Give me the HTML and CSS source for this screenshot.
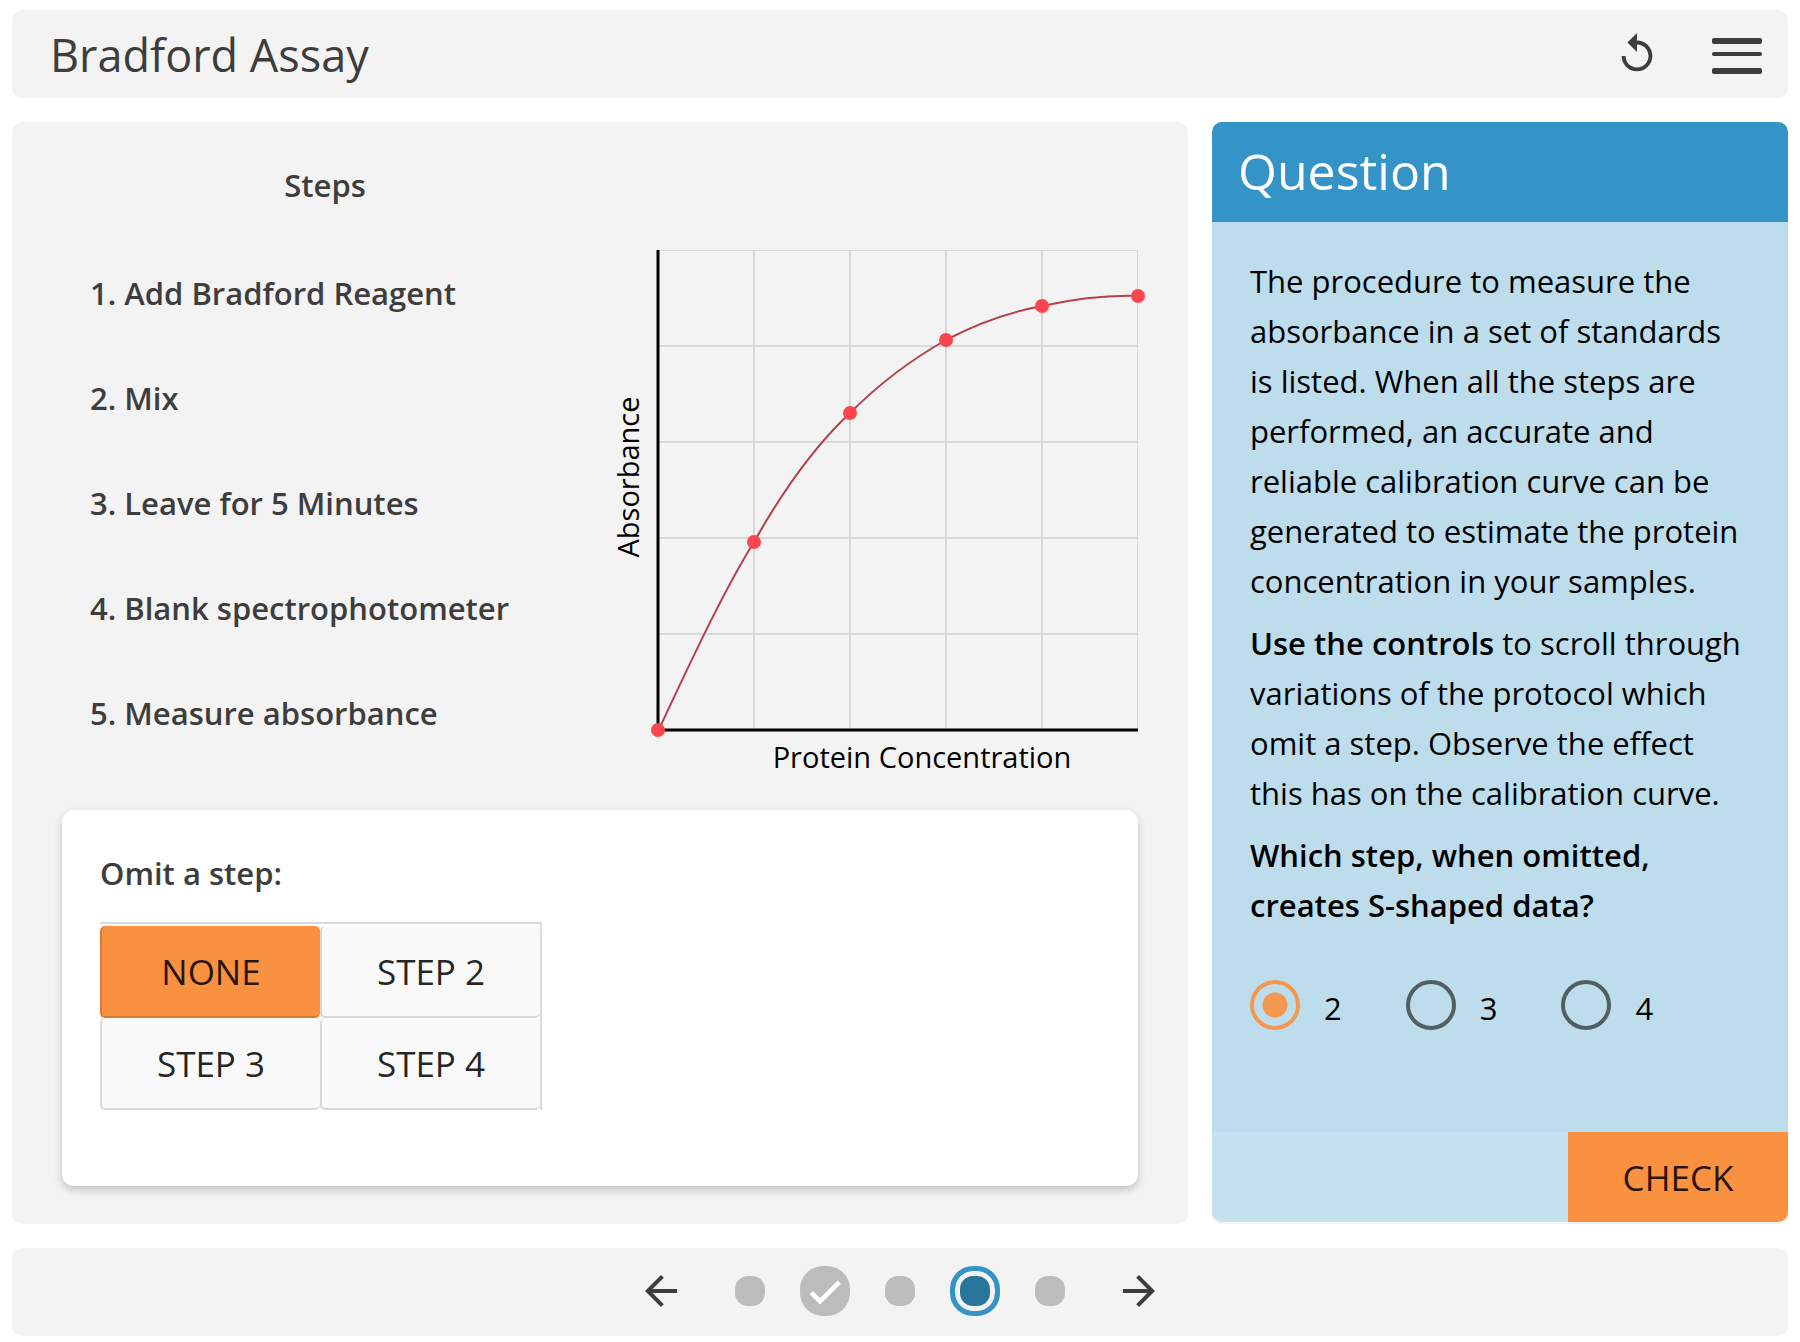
FILE: index.html
```html
<!DOCTYPE html>
<html lang="en">
<head>
    <meta charset="UTF-8">
    <meta name="viewport" content="width=device-width, initial-scale=1.0">
    <title>Bradford Assay</title>
    <link rel="stylesheet" href="styles.css">
</head>
<body>
    <header class="top-bar">
        <h1>Bradford Assay</h1>
        <div class="top-actions">
            <button type="button" class="icon-button" aria-label="Reset">
                <svg width="46" height="46" viewBox="0 0 24 24"><path d="M12 5V1L7 6l5 5V7c3.31 0 6 2.69 6 6s-2.69 6-6 6-6-2.69-6-6H4c0 4.42 3.58 8 8 8s8-3.58 8-8-3.58-8-8-8z"/></svg>
            </button>
            <button type="button" class="icon-button" aria-label="Menu">
                <svg width="50" height="40" viewBox="0 0 50 40">
                    <rect x="0" y="4" width="50" height="6" rx="2"/>
                    <rect x="0" y="18" width="50" height="4" rx="2"/>
                    <rect x="0" y="34" width="50" height="6" rx="2"/>
                </svg>
            </button>
        </div>
    </header>

    <div class="content">
        <main class="panel">
            <div class="experiment">
                <section class="steps">
                    <h2>Steps</h2>
                    <ol>
                        <li>1. Add Bradford Reagent</li>
                        <li>2. Mix</li>
                        <li>3. Leave for 5 Minutes</li>
                        <li>4. Blank spectrophotometer</li>
                        <li>5. Measure absorbance</li>
                    </ol>
                </section>

                <svg class="chart" viewBox="0 0 550 550" role="img" aria-label="Calibration curve">
                    <path class="grid" d="M70 106H550M70 202H550M70 298H550M70 394H550M166 10V490M262 10V490M358 10V490M454 10V490"/>
                    <path class="frame" d="M70 10.500H549.500V490"/>
                    <path class="axis" d="M70 10V490H550"/>
                    <path class="curve" d="M72 487C104 419 135 352 166 302C198 245 230 203 262 173C294 141 326 118 358 100C390 83 422 72 454 66C486 59 518 55 550 56"/>
                    <g class="points">
                        <circle cx="70" cy="490" r="7"/>
                        <circle cx="166" cy="302" r="7"/>
                        <circle cx="262" cy="173" r="7"/>
                        <circle cx="358" cy="100" r="7"/>
                        <circle cx="454" cy="66" r="7"/>
                        <circle cx="550" cy="56" r="7"/>
                    </g>
                    <text x="334" y="528">Protein Concentration</text>
                    <text transform="translate(51 237) rotate(-90)">Absorbance</text>
                </svg>
            </div>

            <section class="card">
                <h2 id="omit-label">Omit a step:</h2>
                <div class="toggle-group" role="group" aria-labelledby="omit-label">
                    <button type="button" class="toggle active">NONE</button>
                    <button type="button" class="toggle">STEP 2</button>
                    <button type="button" class="toggle">STEP 3</button>
                    <button type="button" class="toggle">STEP 4</button>
                </div>
            </section>
        </main>

        <aside class="question">
            <h2>Question</h2>
            <div class="question-body">
                <p>The procedure to measure the absorbance in a set of standards is listed. When all the steps are performed, an accurate and reliable calibration curve can be generated to estimate the protein concentration in your samples.</p>
                <p><b>Use the controls</b> to scroll through variations of the protocol which omit a step. Observe the effect this has on the calibration curve.</p>
                <p><b>Which step, when omitted, creates S-shaped data?</b></p>
                <div class="answers">
                    <label><input type="radio" name="answer" value="2" checked> <span>2</span></label>
                    <label><input type="radio" name="answer" value="3"> <span>3</span></label>
                    <label><input type="radio" name="answer" value="4"> <span>4</span></label>
                </div>
            </div>
            <div class="question-footer">
                <button type="button" class="check">CHECK</button>
            </div>
        </aside>
    </div>

    <nav class="bottom-bar" aria-label="Pages">
        <button type="button" class="icon-button" aria-label="Previous">
            <svg width="48" height="48" viewBox="0 0 24 24"><path d="M20 11H7.83l5.59-5.59L12 4l-8 8 8 8 1.41-1.41L7.83 13H20v-2z"/></svg>
        </button>
        <div class="pages">
            <button type="button" class="page" aria-label="Page 1"></button>
            <button type="button" class="page done" aria-label="Page 2">
                <svg width="50" height="50" viewBox="0 0 50 50"><path d="M9.700 28.300L13 25L20 32L37.700 14.500L41 17.700L20 38.500z"/></svg>
            </button>
            <button type="button" class="page" aria-label="Page 3"></button>
            <button type="button" class="page current" aria-label="Page 4"></button>
            <button type="button" class="page" aria-label="Page 5"></button>
        </div>
        <button type="button" class="icon-button" aria-label="Next">
            <svg width="48" height="48" viewBox="0 0 24 24"><path d="M12 4l-1.410 1.410L16.170 11H4v2h12.170l-5.580 5.590L12 20l8-8z"/></svg>
        </button>
    </nav>

    <script>
        // Only one option of the group can be active
        const toggles = document.querySelectorAll('.toggle');
        toggles.forEach(toggle => {
            toggle.addEventListener('click', () => {
                toggles.forEach(t => t.classList.remove('active'));
                toggle.classList.add('active');
            });
        });
    </script>
</body>
</html>
```

FILE: styles.css
```css
* {
    box-sizing: border-box;
}
body {
    display: flex;
    flex-direction: column;
    gap: 24px;
    min-height: 100vh;
    margin: 0;
    padding: 10px 12px 6px;
    background-color: white;
    color: #3d3d3d;
    font-family: "Open Sans", "Noto Sans", sans-serif;
    font-size: 31px;
    line-height: 50px;
}
h1, h2, p, ol {
    margin: 0;
    padding: 0;
}
h2 {
    font-size: 31px;
    font-weight: 600;
}
b {
    font-weight: 600;
}
button {
    padding: 0;
    border: none;
    background: none;
    font-family: inherit;
    font-size: 35px;
    color: rgba(0,0,0,0.87);
    cursor: pointer;
}
svg {
    display: block;
}
.icon-button {
    fill: #3d3d3d;
}

/* Top bar */
.top-bar {
    display: flex;
    align-items: center;
    justify-content: space-between;
    height: 88px;
    padding: 0 26px 0 38px;
    border-radius: 10px;
    background-color: #f3f3f3;
}
.top-bar h1 {
    padding-top: 2px;
    font-size: 45px;
    font-weight: 400;
}
.top-actions {
    display: flex;
    align-items: center;
    gap: 52px;
}

/* Main area */
.content {
    flex: 1;
    display: grid;
    grid-template-columns: 49fr 24fr;
    gap: 24px;
}
.panel {
    display: flex;
    flex-direction: column;
    gap: 20px;
    padding: 38px 50px;
    border-radius: 10px;
    background-color: #f3f3f3;
}
.experiment {
    display: grid;
    grid-template-columns: 1fr 550px;
}
.steps h2 {
    text-align: center;
}
.steps ol {
    display: flex;
    flex-direction: column;
    gap: 55px;
    padding: 58px 0 52px 28px;
    list-style: none;
    font-weight: 600;
}

/* Chart */
.chart {
    width: 100%;
    align-self: end;
    overflow: visible;
}
.chart text {
    font-size: 29px;
    text-anchor: middle;
    fill: black;
}
.grid {
    fill: none;
    stroke: #d8d8d8;
    stroke-width: 2;
}
.frame {
    fill: none;
    stroke: #d8d8d8;
    stroke-width: 1;
}
.axis {
    fill: none;
    stroke: black;
    stroke-width: 3;
}
.curve {
    fill: none;
    stroke: #b3404a;
    stroke-width: 2;
}
.points {
    fill: #fb454f;
}

/* Controls */
.card {
    flex: 1;
    padding: 38px;
    border-radius: 12px;
    background-color: white;
    box-shadow: 0 4px 8px rgba(0,0,0,0.2);
}
.toggle-group {
    display: grid;
    grid-template-columns: 220px 220px;
    grid-auto-rows: 92px;
    width: 442px;
    margin-top: 24px;
    padding-top: 2px;
    border-top: 2px solid #dbdbdb;
    border-right: 2px solid #dbdbdb;
}
.toggle {
    border-left: 2px solid #d8d8d8;
    border-bottom: 2px solid #d8d8d8;
    border-radius: 5px;
    background-color: #f9f9f9;
}
.toggle.active {
    border-color: #d97b38;
    background-color: #fa9141;
}

/* Question */
.question {
    display: flex;
    flex-direction: column;
    margin-bottom: 2px;
    border-radius: 10px;
    background-color: #bddded;
    color: black;
    overflow: hidden;
    box-shadow: 0 2px 0 #f3f3f3;
}
.question h2 {
    padding: 0 26px 2px;
    background-color: #3594c7;
    color: white;
    font-size: 50px;
    font-weight: 400;
    line-height: 98px;
}
.question-body {
    flex: 1;
    display: flex;
    flex-direction: column;
    gap: 12px;
    padding: 34px 44px 34px 38px;
}
.answers {
    display: flex;
    gap: 64px;
    margin-top: 35px;
}
.answers label {
    display: flex;
    align-items: center;
    gap: 24px;
    cursor: pointer;
}
.answers span {
    padding-top: 6px;
}
.answers input {
    appearance: none;
    width: 50px;
    height: 50px;
    margin: 0;
    border: 4px solid #515e64;
    border-radius: 50%;
}
.answers input:checked {
    border-color: #f29850;
    background: radial-gradient(circle, #f29850 12px, transparent 13px);
}
.question-footer {
    display: flex;
    justify-content: flex-end;
    height: 90px;
    background-color: #c6e2f0;
}
.check {
    width: 220px;
    background-color: #fa9141;
}

/* Bottom bar */
.bottom-bar {
    display: flex;
    align-items: center;
    justify-content: center;
    gap: 50px;
    height: 88px;
    padding-bottom: 2px;
    border-radius: 10px;
    background-color: #f3f3f3;
}
.pages {
    display: flex;
    align-items: center;
    gap: 45px;
}
.page {
    width: 30px;
    height: 30px;
    border-radius: 13px;
    background-color: #bcbcbc;
}
.page.done {
    width: 50px;
    height: 50px;
    margin: 0 -10px;
    border-radius: 23px;
    fill: white;
}
.page.current {
    width: 50px;
    height: 50px;
    margin: 0 -10px;
    border: 5px solid #3594c7;
    border-radius: 23px;
    background-color: #2a759c;
    box-shadow: inset 0 0 0 5px #f3f3f3;
}
```
